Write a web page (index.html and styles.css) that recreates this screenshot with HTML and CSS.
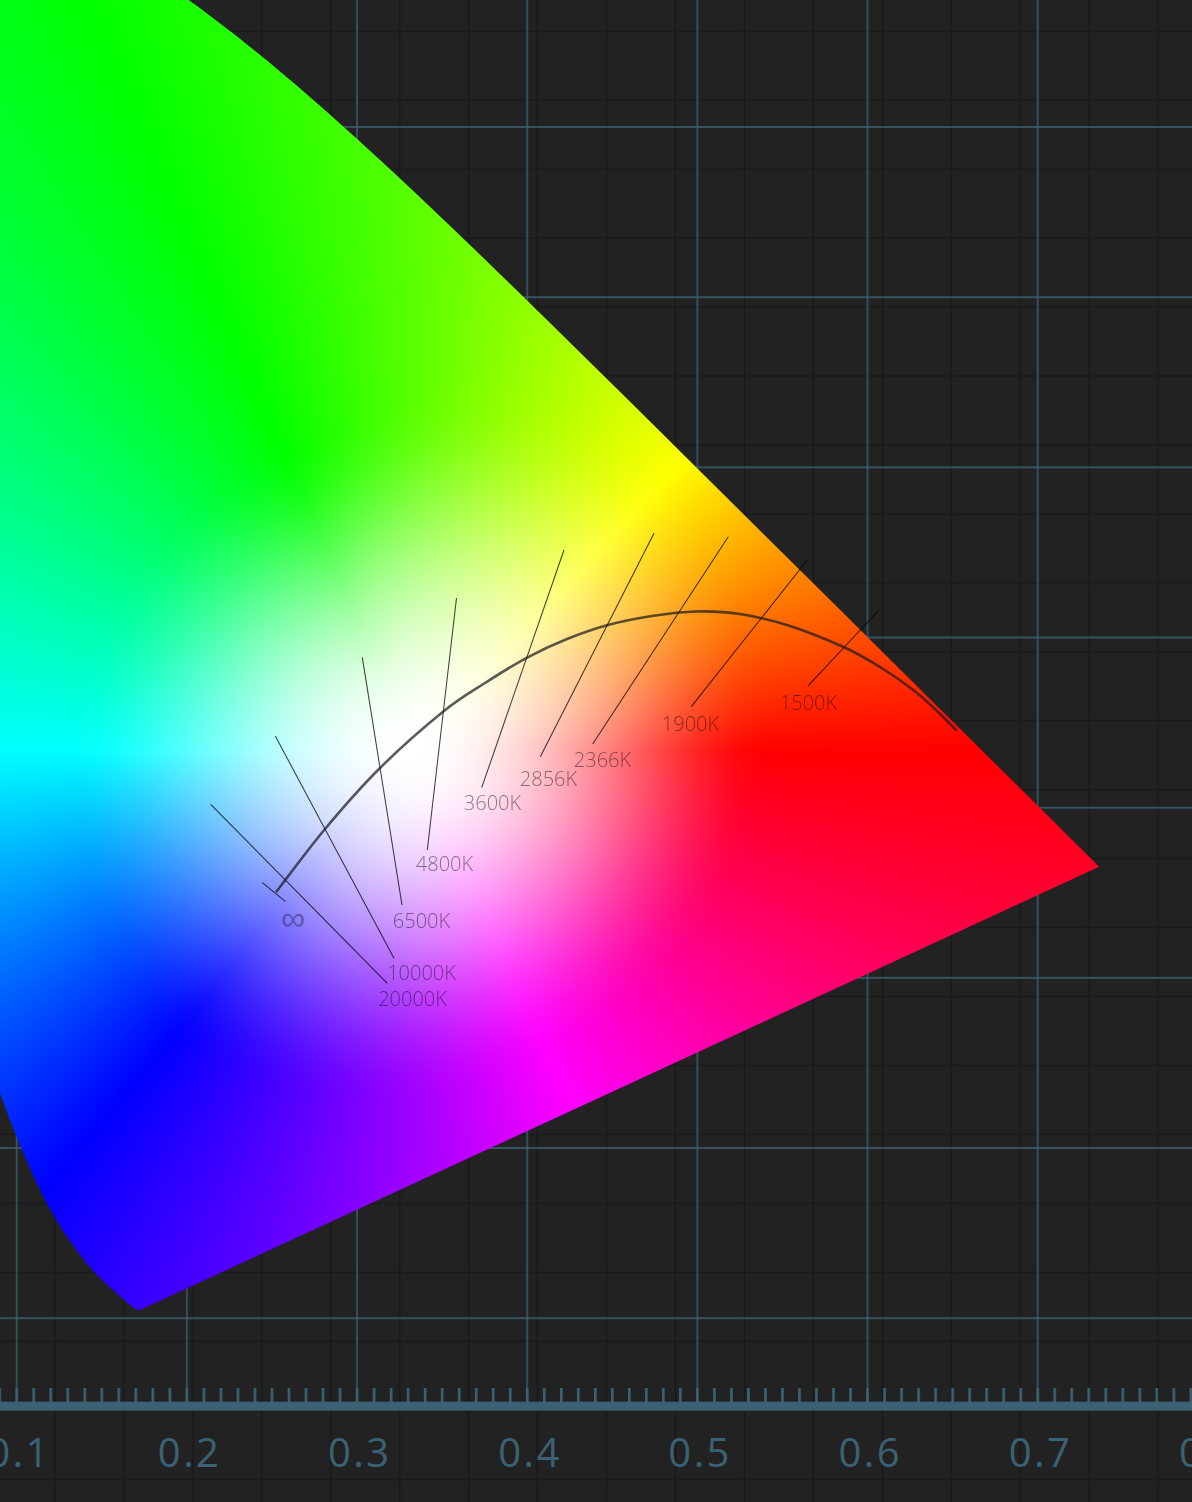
FILE: index.html
```html
<!DOCTYPE html>
<html lang="en">
<head>
<meta charset="utf-8">
<title>CIE 1931 chromaticity diagram</title>
<link rel="stylesheet" href="styles.css">
</head>
<body>
<main class="stage">
  <svg class="layer" viewBox="0 0 1192 1502" aria-hidden="true">
    <defs>
      <pattern id="minor" patternUnits="userSpaceOnUse" width="68.95" height="68.95" x="20.5" y="-3.25">
        <path class="minor-line" d="M34.475 0V68.95M0 34.475H68.95"/>
      </pattern>
      <pattern id="majorV" patternUnits="userSpaceOnUse" width="170.17" height="1502" x="16.7" y="0">
        <path class="major-line" d="M0 0V1502M170.17 0V1502"/>
      </pattern>
      <pattern id="majorH" patternUnits="userSpaceOnUse" width="1192" height="170.17" x="0" y="127">
        <path class="major-line" d="M0 0H1192M0 170.17H1192"/>
      </pattern>
      <pattern id="ticks" patternUnits="userSpaceOnUse" width="17.017" height="14" x="15.4" y="1388">
        <rect class="axis" x="0" y="0" width="2.6" height="14"/>
      </pattern>
    </defs>
    <rect class="bg" width="1192" height="1502"/>
    <rect fill="url(#minor)" width="1192" height="1502"/>
    <rect fill="url(#majorV)" width="1192" height="1402"/>
    <rect fill="url(#majorH)" width="1192" height="1402"/>
    <rect fill="url(#ticks)" y="1388" width="1192" height="14"/>
    <rect class="axis" y="1401.7" width="1192" height="9"/>
    <g class="axis-labels">
      <text x="19" y="1466.7">0.1</text>
      <text x="189.6" y="1466.7">0.2</text>
      <text x="359.8" y="1466.7">0.3</text>
      <text x="530" y="1466.7">0.4</text>
      <text x="700.1" y="1466.7">0.5</text>
      <text x="870.3" y="1466.7">0.6</text>
      <text x="1040.5" y="1466.7">0.7</text>
      <text x="1210.7" y="1466.7">0.8</text>
    </g>
  </svg>
  <canvas id="field" class="layer" width="1192" height="1502"></canvas>
  <svg class="layer" viewBox="0 0 1192 1502" aria-hidden="true">
    <g class="isotherms">
      <path d="M210.7 804.3L387.3 983.3"/>
      <path d="M275.3 736L394 958.3"/>
      <path d="M362.3 657.3L402 905"/>
      <path d="M456.5 598L427.3 850"/>
      <path d="M564 550L481.7 787.7"/>
      <path d="M654 533.3L540.3 756.7"/>
      <path d="M728.3 536.7L592.7 744"/>
      <path d="M807.3 560L691.3 706.7"/>
      <path d="M879 610L808.3 685.7"/>
      <path d="M262.3 882.7L285.3 901.3"/>
    </g>
    <path id="planck" class="planck" d=""/>
    <g class="temps">
      <text x="808.5" y="709.6">1500K</text>
      <text x="690.5" y="730.6">1900K</text>
      <text x="602.5" y="766.6">2366K</text>
      <text x="548.5" y="785.6">2856K</text>
      <text x="492.5" y="809.6">3600K</text>
      <text x="444.5" y="870.6">4800K</text>
      <text x="421.5" y="927.6">6500K</text>
      <text x="421.5" y="979.6">10000K</text>
      <text x="412.5" y="1005.6">20000K</text>
      <text class="infinity" x="293" y="930">∞</text>
    </g>
  </svg>
</main>
<script src="diagram.js"></script>
</body>
</html>
```

FILE: styles.css
```css
html, body {
  margin: 0;
  padding: 0;
  background: #222222;
}

.stage {
  display: grid;
  width: 1192px;
  height: 1502px;
  overflow: hidden;
}

.layer {
  grid-area: 1 / 1;
  display: block;
  width: 1192px;
  height: 1502px;
}

.bg { fill: #222222; }

.minor-line {
  fill: none;
  stroke: #181818;
  stroke-width: 1.7;
}

.major-line {
  fill: none;
  stroke: #3b6273;
  stroke-width: 1.4;
}

.axis { fill: #3a6274; }

.axis-labels text {
  font-family: "Open Sans", sans-serif;
  font-size: 40px;
  letter-spacing: 2.4px;
  fill: #3a6274;
  text-anchor: middle;
}

.isotherms path {
  fill: none;
  stroke: #000000;
  stroke-opacity: 0.75;
  stroke-width: 1.05;
}

.planck {
  fill: none;
  stroke: #1c1c1c;
  stroke-opacity: 0.72;
  stroke-width: 2.6;
}

.temps text {
  font-family: "Open Sans", sans-serif;
  font-weight: 300;
  font-size: 20px;
  fill: #000000;
  fill-opacity: 0.48;
  text-anchor: middle;
}

.temps .infinity {
  font-family: "DejaVu Sans", sans-serif;
  font-weight: 200;
  font-size: 34px;
  fill-opacity: 0.34;
}
```

FILE: diagram.js
```js
// Chromaticity field: hue from the angle round the white point, saturation from the
// distance to it; softened a little, then clipped to the spectral locus.
var locus = [
  [.1741,.0050],[.1733,.0048],[.1714,.0051],[.1689,.0069],[.1644,.0109],[.1566,.0177],
  [.1440,.0297],[.1241,.0578],[.1096,.0868],[.0913,.1327],[.0687,.2007],[.0454,.2950],
  [.0235,.4127],[.0082,.5384],[.0039,.6548],[.0139,.7502],[.0389,.8120],[.0743,.8338],
  [.1142,.8262],[.1547,.8059],[.1929,.7816],[.2296,.7543],[.2658,.7243],[.3016,.6923],
  [.3373,.6589],[.3731,.6245],[.4087,.5896],[.4441,.5547],[.4788,.5202],[.5125,.4866],
  [.5448,.4544],[.5752,.4242],[.6029,.3965],[.6270,.3725],[.6482,.3514],[.6658,.3340],
  [.6915,.3083],[.7079,.2920],[.7190,.2809],[.7260,.2740],[.7334,.2666],[.7347,.2653]
];
var CX = 412, CY = 750, BLUR = 3, PAD = 16;
// hue anchors: red, yellow, green, cyan, blue, magenta, red
var ANGLES = [0, 47, 113.5, 180, 230, 294, 360];
var RADII  = [360, 390, 330, 350, 380, 335, 360];
var COLORS = [[1,0,0],[1,1,0],[0,1,0],[0,1,1],[0,0,1],[1,0,1],[1,0,0]];

var canvas = document.getElementById('field');
var ctx = canvas.getContext('2d');
var W = canvas.width, H = canvas.height;
var off = document.createElement('canvas');
off.width = W + 2 * PAD; off.height = H + 2 * PAD;
var img = off.getContext('2d').createImageData(off.width, off.height);
for (var py = 0, i = 0; py < off.height; py++) {
  for (var px = 0; px < off.width; px++, i += 4) {
    var dx = px - PAD - CX, dy = CY - (py - PAD);
    var deg = Math.atan2(dy, dx) * 180 / Math.PI;
    if (deg < 0) deg += 360;
    var n = 0;
    while (n < 5 && deg > ANGLES[n+1]) n++;
    var f = (deg - ANGLES[n]) / (ANGLES[n+1] - ANGLES[n]);
    var edge = RADII[n] + (RADII[n+1] - RADII[n]) * f;
    var s = Math.min(1, Math.sqrt(dx*dx + dy*dy) / edge);
    var u = 1 - s * s;
    var t = 1 - u * u;
    for (var ch = 0; ch < 3; ch++) {
      var pure = COLORS[n][ch] + (COLORS[n+1][ch] - COLORS[n][ch]) * f;
      img.data[i+ch] = 255 * (1 - (1 - pure) * t);
    }
    img.data[i+3] = 255;
  }
}
off.getContext('2d').putImageData(img, 0, 0);
ctx.filter = 'blur(' + BLUR + 'px)';
ctx.drawImage(off, -PAD, -PAD);
ctx.filter = 'none';

// Clip to the locus, rounding it through the midpoints of its samples.
var xy = locus.map(function (p) {
  return [140.5 + (p[0] - .1741) * 1710, 1318.2 - p[1] * 1702];
});
ctx.globalCompositeOperation = 'destination-in';
ctx.beginPath();
ctx.moveTo(xy[0][0], xy[0][1]);
for (var q = 1; q < xy.length - 1; q++) {
  ctx.quadraticCurveTo(xy[q][0], xy[q][1], (xy[q][0] + xy[q+1][0]) / 2, (xy[q][1] + xy[q+1][1]) / 2);
}
ctx.lineTo(xy[xy.length-1][0], xy[xy.length-1][1]);
ctx.closePath();
ctx.fill();

var pts = [[276,892.3],[325,829],[380,768],[443.3,711.5],[485,683],[526.7,657.8],[567,639],[608,625],
  [652,616],[696,611.5],[740,614],[790,626],[844,647.3],[880,667],[913.3,690],[936,710],[956.7,730.7]];
var d = 'M' + pts[0].join(' ');
for (var k = 0; k < pts.length - 1; k++) {
  var p0 = pts[Math.max(k-1,0)], p1 = pts[k], p2 = pts[k+1], p3 = pts[Math.min(k+2,pts.length-1)];
  d += 'C' + (p1[0]+(p2[0]-p0[0])/6) + ' ' + (p1[1]+(p2[1]-p0[1])/6) + ' ' +
       (p2[0]-(p3[0]-p1[0])/6) + ' ' + (p2[1]-(p3[1]-p1[1])/6) + ' ' + p2[0] + ' ' + p2[1];
}
document.getElementById('planck').setAttribute('d', d);
```
